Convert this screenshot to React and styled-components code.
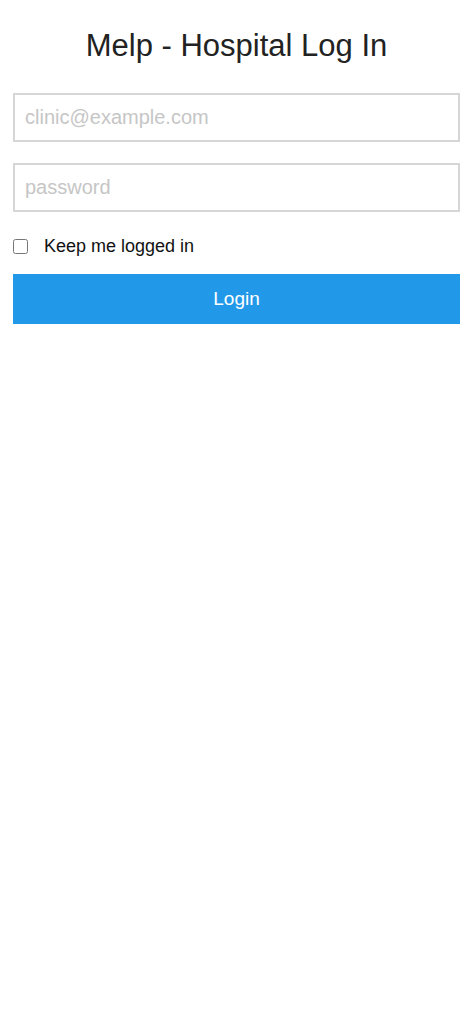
import styled, { createGlobalStyle } from 'styled-components'

const GlobalStyle = createGlobalStyle`
	body {
		margin: 0;
		background: #fff;
		font-family: 'Liberation Sans', Arial, sans-serif;
	}
`

export default function App() {
	return (
		<Page>
			<GlobalStyle />
			<Title>Melp - Hospital Log In</Title>
			<Form onSubmit={(e) => e.preventDefault()}>
				<Field type="email" placeholder="clinic@example.com" />
				<Field type="password" placeholder="password" />
				<CheckRow>
					<input type="checkbox" />
					<span>Keep me logged in</span>
				</CheckRow>
				<LoginButton type="submit">Login</LoginButton>
			</Form>
		</Page>
	)
}

const Page = styled.div`
	padding: 0 13px;
`
const Title = styled.h1`
	margin: 0;
	padding-top: 28px;
	text-align: center;
	font-size: 31px;
	font-weight: 400;
	line-height: 36px;
	color: #222;
`
const Form = styled.form`
	display: flex;
	flex-direction: column;
	margin-top: 29px;
`
const Field = styled.input`
	box-sizing: border-box;
	width: 100%;
	height: 49px;
	margin-bottom: 21px;
	padding: 0 10px;
	border: 2px solid #d6d6d6;
	border-radius: 0;
	font-family: inherit;
	font-size: 20px;
	color: #222;
	outline: none;
	&::placeholder {
		color: #c6c6c6;
	}
`
const CheckRow = styled.label`
	display: flex;
	align-items: center;
	gap: 16px;
	height: 22px;
	margin-top: 2px;
	font-size: 18px;
	color: #111;
	input {
		margin: 0;
		width: 15px;
		height: 15px;
	}
`
const LoginButton = styled.button`
	margin-top: 17px;
	height: 50px;
	border: none;
	background: #2299e8;
	color: #fff;
	font-family: inherit;
	font-size: 19px;
	cursor: pointer;
`
